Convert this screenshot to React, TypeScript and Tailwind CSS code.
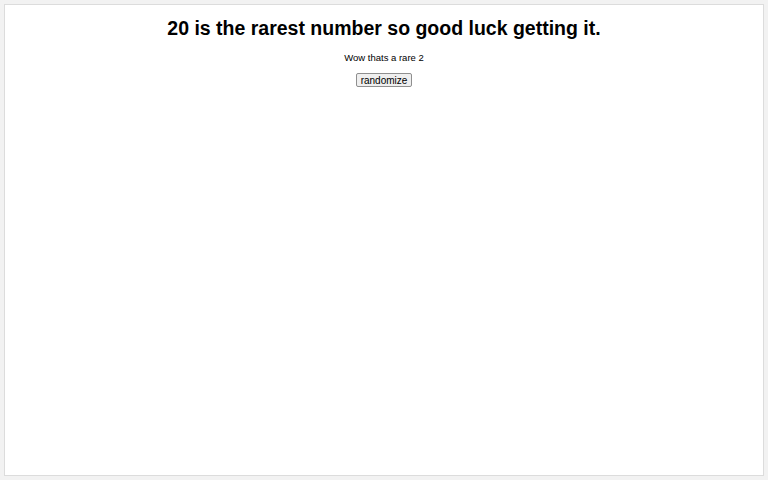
export default function App() {
  return (
    <div className="min-h-[480px] bg-[#f2f2f2] p-[4px] font-['Liberation_Sans',Arial,sans-serif] text-black">
      <div className="h-[472px] bg-white border border-[#dcdcdc] flex flex-col items-center">
        <h1 className="mt-[12px] text-[19.5px] leading-[22px] font-bold">20 is the rarest number so good luck getting it.</h1>
        <p className="mt-[13px] text-[9.5px] leading-[11px]">Wow thats a rare 2</p>
        <button className="mt-[10px] h-[14px] px-[4px] text-[10px] leading-[11px] bg-[#efefef] border border-[#8f8f8f] rounded-[2px]">
          randomize
        </button>
      </div>
    </div>
  );
}
